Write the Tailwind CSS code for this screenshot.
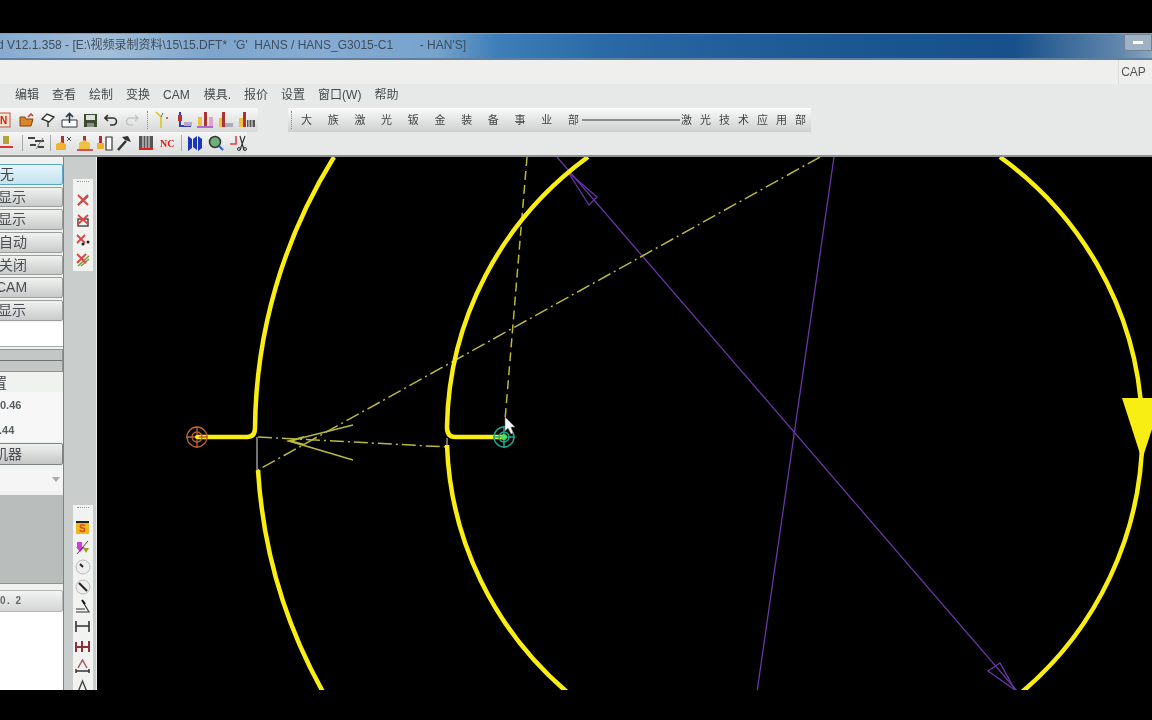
<!DOCTYPE html>
<html lang="zh-CN">
<head>
    <meta charset="UTF-8">
    <title>CAD</title>
    <script src="https://cdn.jsdelivr.net/npm/@tailwindcss/browser@4"></script>
</head>
<body class="bg-black">
    <div class="w-[1152px] h-[720px] overflow-hidden bg-black pt-[33px] pb-[30px] flex flex-col blur-[0.4px] font-['Liberation_Sans','Noto_Sans_CJK_SC',sans-serif] text-[#4a4f52]">

        <!-- Title bar -->
        <div class="h-[27px] shrink-0 flex justify-between border-t border-[#8aa0b4] border-b-2 border-b-[#5f7f9f] bg-[linear-gradient(90deg,#86abd0_0%,#a4bfd8_9%,#7ea6cd_18%,#86acd2_28%,#76a2cc_38%,#3f7fb9_43%,#2a6aa6_52%,#235f9c_62%,#1b5690_75%,#17508a_88%,#5f85ab_97%,#8aa5bf_100%)]">
            <div class="pl-0 -ml-[3px] text-[12px] leading-[22px] text-[#3d4d5e] whitespace-pre">d V12.1.358 - [E:\视频录制资料\15\15.DFT*  'G'  HANS / HANS_G3015-C1        - HAN'S]</div>
            <div class="w-[28px] h-[17px] bg-[#9fb2c4] border border-[#6d8296] rounded-bl-[3px] flex items-center justify-center">
                <div class="w-[10px] h-[3px] bg-white"></div>
            </div>
        </div>

        <!-- Status strip -->
        <div class="h-[24px] shrink-0 bg-[#eff0ee] flex justify-end pr-[4px]">
            <div class="w-[30px] border-l border-[#dcdedc] text-[12px] leading-[24px] text-center text-[#555]">CAP</div>
        </div>

        <!-- Menu and toolbars -->
        <div class="h-[73px] shrink-0 bg-[#e6e9e7] border-b-2 border-[#8d9190] relative">
            <div class="h-[21px] pt-[1px] flex text-[12px] leading-[21px] text-[#474a4c]">
                <span class="ml-[15px]">编辑</span>
                <span class="ml-[13px]">查看</span>
                <span class="ml-[13px]">绘制</span>
                <span class="ml-[13px]">变换</span>
                <span class="ml-[13px]">CAM</span>
                <span class="ml-[14px]">模具.</span>
                <span class="ml-[13px]">报价</span>
                <span class="ml-[13px]">设置</span>
                <span class="ml-[13px]">窗口(W)</span>
                <span class="ml-[13px]">帮助</span>
            </div>
            <div class="flex items-start mt-[3px]">
                <div class="w-[288px] shrink-0">
                    <!-- Toolbar row 1 -->
                    <div class="w-[258px] h-[24px] flex items-center bg-[linear-gradient(180deg,#f7f8f7,#d6d9d7)]">
                        <svg class="w-[14px] h-[16px] -ml-[3px]" viewBox="0 0 14 16"><rect x="1" y="1" width="12" height="14" fill="#f4e4cc" stroke="#b55"/><text x="3" y="12" font-size="10" font-weight="700" fill="#c22">N</text></svg>
                        <svg class="w-[16px] h-[16px] ml-[8px]" viewBox="0 0 16 16"><path d="M1 5h5l1 2h7l-2 7H1z" fill="#d9862a" stroke="#7a4410"/><path d="M9 5l3-3 2 2" fill="none" stroke="#c33" stroke-width="1.5"/></svg>
                        <svg class="w-[16px] h-[16px] ml-[5px]" viewBox="0 0 16 16"><path d="M2 7l5-5 7 3-5 5zM8 10v5" fill="#fff" stroke="#333" stroke-width="1.4"/></svg>
                        <svg class="w-[17px] h-[16px] ml-[5px]" viewBox="0 0 17 16"><path d="M1 8h15v7H1z" fill="#fff" stroke="#334"/><path d="M8.500 11V2M5 5l3.500-3.500L12 5" fill="none" stroke="#234" stroke-width="1.600"/></svg>
                        <svg class="w-[15px] h-[15px] ml-[5px]" viewBox="0 0 15 15"><rect x="1" y="1" width="13" height="13" fill="#3d4a34"/><rect x="3" y="2" width="9" height="5" fill="#dfe3d8"/><rect x="4" y="10" width="7" height="4" fill="#8b8f80"/></svg>
                        <svg class="w-[14px] h-[12px] ml-[6px]" viewBox="0 0 14 12"><path d="M4 1L1 4l3 3M1 4h8a3.500 3.500 0 0 1 0 7H6" fill="none" stroke="#333" stroke-width="1.600"/></svg>
                        <svg class="w-[14px] h-[12px] ml-[7px]" viewBox="0 0 14 12"><path d="M10 1l3 3-3 3M13 4H5a3.500 3.500 0 0 0 0 7h3" fill="none" stroke="#c4c7c5" stroke-width="1.600"/></svg>
                        <div class="h-[18px] ml-[8px] border-l border-dotted border-[#888]"></div>
                        <svg class="w-[14px] h-[18px] ml-[7px]" viewBox="0 0 14 18"><path d="M1 1l5 5v11" fill="none" stroke="#d8c820" stroke-width="1.600"/><path d="M6 6l2-4" stroke="#668" fill="none"/><circle cx="12" cy="7" r="1" fill="#c33"/></svg>
                        <svg class="w-[18px] h-[18px] ml-[6px]" viewBox="0 0 18 18"><path d="M5 1v14h11" fill="none" stroke="#3a3ab0" stroke-width="2"/><path d="M3 4h4v6H3z" fill="#b33"/><path d="M9 11h8v4H9z" fill="#b9a9c9"/></svg>
                        <svg class="w-[18px] h-[18px] ml-[3px]" viewBox="0 0 18 18"><path d="M1 15h16v2H1z" fill="#b36ad0"/><path d="M8 1h3v14H8z" fill="#a33"/><path d="M2 6h4v9H2z" fill="#f0c040"/><path d="M13 6h4v9h-4z" fill="#e5a0d0"/></svg>
                        <svg class="w-[16px] h-[18px] ml-[4px]" viewBox="0 0 16 18"><path d="M4 1h3v15H4z" fill="#a33"/><path d="M1 7h3v9H1z" fill="#f0c040"/><path d="M7 12h8v4H7z" fill="#aab"/></svg>
                        <svg class="w-[18px] h-[18px] ml-[4px]" viewBox="0 0 18 18"><path d="M5 1h3v15H5z" fill="#a33"/><path d="M1 7h4v9H1z" fill="#f0c040"/><path d="M9 9h8v7H9z" fill="#555"/><path d="M11 9v7M14 9v7" stroke="#eee"/></svg>
                    </div>
                    <!-- Toolbar row 2 -->
                    <div class="w-[247px] h-[22px] mt-[0px] flex items-center bg-[linear-gradient(180deg,#f4f5f4,#dcdfdd)]">
                        <svg class="w-[14px] h-[16px] -ml-[1px]" viewBox="0 0 14 16"><path d="M4 1h6v8H4z" fill="#b5a23a"/><path d="M0 11h14v2H0z" fill="#d33"/></svg>
                        <div class="h-[16px] ml-[9px] border-l border-[#aaa]"></div>
                        <svg class="w-[18px] h-[14px] ml-[4px]" viewBox="0 0 18 14"><path d="M1 2h7M8 5h9M3 9h6M11 11h6" stroke="#444" stroke-width="2"/><path d="M9 13l7-11" stroke="#777"/></svg>
                        <div class="h-[16px] ml-[5px] border-l border-[#aaa]"></div>
                        <svg class="w-[18px] h-[16px] ml-[4px]" viewBox="0 0 18 16"><path d="M6 1h3v9H6z" fill="#a33"/><path d="M1 9l5-2 5 2v6H1z" fill="#f0b030"/><path d="M12 2l4 4M16 2l-4 4" stroke="#555"/></svg>
                        <svg class="w-[18px] h-[16px] ml-[3px]" viewBox="0 0 18 16"><path d="M7 1h3v8H7z" fill="#a33"/><path d="M1 14h16v2H1z" fill="#c55"/><path d="M3 8l5-3 6 3v6H3z" fill="#f2c040"/></svg>
                        <svg class="w-[18px] h-[18px] ml-[2px]" viewBox="0 0 18 18"><path d="M3 2h3v8H3z" fill="#a33"/><path d="M1 9h7v6H1z" fill="#f0b030"/><path d="M10 3h6v13h-6z" fill="#fff" stroke="#333" stroke-width="1.200"/></svg>
                        <svg class="w-[16px] h-[16px] ml-[2px]" viewBox="0 0 16 16"><path d="M2 15L10 6" stroke="#333" stroke-width="2.500"/><path d="M6 2l6-1 3 6-3-1-3-1z" fill="#333"/></svg>
                        <svg class="w-[16px] h-[16px] ml-[6px]" viewBox="0 0 16 16"><rect x="1" y="1" width="14" height="12" fill="#555"/><path d="M5 1v12M8 1v12M11 1v12" stroke="#eee"/><path d="M1 14h14" stroke="#d22" stroke-width="2"/></svg>
                        <span class="ml-[6px] w-[18px] text-[10px] font-bold text-[#d42020] font-['Liberation_Serif',serif]">NC</span>
                        <div class="h-[16px] ml-[3px] border-l border-[#aaa]"></div>
                        <svg class="w-[16px] h-[16px] ml-[5px]" viewBox="0 0 16 16"><path d="M1 1l4 3v9l-4 3zM6 4l4-3v14l-4-3zM11 1l4 3v9l-4 3z" fill="#1a35b5"/></svg>
                        <svg class="w-[16px] h-[16px] ml-[5px]" viewBox="0 0 16 16"><circle cx="7" cy="7" r="5.500" fill="#6db07a" stroke="#333" stroke-width="1.500"/><path d="M11 11l4 4" stroke="#2a5ad0" stroke-width="2"/></svg>
                        <svg class="w-[18px] h-[16px] ml-[5px]" viewBox="0 0 18 16"><path d="M7 1v8H1" fill="none" stroke="#d44" stroke-width="1.600"/><path d="M11 1l4 14M16 1l-5 14" stroke="#333" stroke-width="1.200"/><circle cx="10" cy="14" r="1.500" fill="none" stroke="#333"/><circle cx="16" cy="14" r="1.500" fill="none" stroke="#333"/></svg>
                    </div>
                </div>
                <!-- Text toolbar -->
                <div class="w-[523px] h-[24px] flex items-center bg-[linear-gradient(180deg,#fafbfa,#ccd0ce)] text-[11px] text-[#444]">
                    <div class="h-[18px] ml-[3px] border-l border-dotted border-[#888]"></div>
                    <div class="ml-[9px] w-[278px] flex justify-between">
                        <span>大</span><span>族</span><span>激</span><span>光</span><span>钣</span><span>金</span><span>装</span><span>备</span><span>事</span><span>业</span><span>部</span>
                    </div>
                    <div class="w-[98px] ml-[3px] h-[1px] border-t-2 border-[#8d8f8c]"></div>
                    <div class="ml-[1px] w-[125px] flex justify-between">
                        <span>激</span><span>光</span><span>技</span><span>术</span><span>应</span><span>用</span><span>部</span>
                    </div>
                </div>
            </div>
        </div>

        <div class="flex-1 min-h-0 flex">
            <!-- Left panel -->
            <div class="w-[97px] shrink-0 flex bg-[#c9cdcb] border-r border-[#eef0ee]">
                <div class="w-[64px] shrink-0 flex flex-col text-[14px] overflow-hidden pt-[7px] border-r border-[#7f8382] bg-[#f0f2f0]">
                    <div class="h-[20.700px] bg-[linear-gradient(180deg,#e8f5fb,#c3e2f0)] border border-[#5aa5c5] rounded-r-[2px] leading-[19px] text-[#444] -ml-[1px]">无</div>
                    <div class="h-[20.700px] mt-[2px] bg-[linear-gradient(180deg,#f0f2f0,#c7cbc9)] border border-[#9a9e9c] rounded-r-[2px] leading-[19px] -ml-[3px]">显示</div>
                    <div class="h-[20.700px] mt-[2px] bg-[linear-gradient(180deg,#f0f2f0,#c7cbc9)] border border-[#9a9e9c] rounded-r-[2px] leading-[19px] -ml-[3px]">显示</div>
                    <div class="h-[20.700px] mt-[2px] bg-[linear-gradient(180deg,#f0f2f0,#c7cbc9)] border border-[#9a9e9c] rounded-r-[2px] leading-[19px] -ml-[2px]">自动</div>
                    <div class="h-[20.700px] mt-[2px] bg-[linear-gradient(180deg,#f0f2f0,#c7cbc9)] border border-[#9a9e9c] rounded-r-[2px] leading-[19px] -ml-[2px]">关闭</div>
                    <div class="h-[20.700px] mt-[2px] bg-[linear-gradient(180deg,#f0f2f0,#c7cbc9)] border border-[#9a9e9c] rounded-r-[2px] leading-[19px] -ml-[5px]">CAM</div>
                    <div class="h-[20.700px] mt-[2px] bg-[linear-gradient(180deg,#f0f2f0,#c7cbc9)] border border-[#9a9e9c] rounded-r-[2px] leading-[19px] -ml-[3px]">显示</div>
                    <div class="h-[25px] mt-[1px] bg-white border-b border-[#aaa]"></div>
                    <div class="h-[23px] mt-[2px] bg-[#c3c7c5] border-y border-r border-[#8f9391] flex items-center"><div class="w-full h-[1px] bg-[#6f7371]"></div></div>
                    <div class="h-[18px] mt-[2px] leading-[18px] text-[#3d4143] -ml-[7px]">置</div>
                    <div class="h-[50px] bg-[#f6f7f6] text-[11px] font-bold text-[#5a5f62]">
                        <div class="leading-[26px]">0.46</div>
                        <div class="leading-[24px] -ml-[1px]">.44</div>
                    </div>
                    <div class="h-[22px] mt-[1px] bg-[linear-gradient(180deg,#f0f2f0,#c3c7c5)] border border-[#7f8382] rounded-r-[2px] leading-[20px] -ml-[7px]">机器</div>
                    <div class="h-[22px] mt-[4px] bg-[#f4f5f4] flex items-center justify-end pr-[3px]">
                        <svg class="w-[8px] h-[5px]" viewBox="0 0 8 5"><path d="M0 0h8L4 5z" fill="#aaa"/></svg>
                    </div>
                    <div class="h-[89px] mt-[4px] bg-[#b9bdbb] border-b border-[#8f9391]"></div>
                    <div class="h-[22px] mt-[6px] bg-[linear-gradient(180deg,#f2f3f2,#d3d6d4)] border border-[#b5b8b6] rounded-r-[2px] text-[10px] leading-[20px] tracking-[1.500px] font-bold text-[#666] -ml-[1px]">0. 2</div>
                    <div class="flex-1 bg-white"></div>
                </div>
                <div class="flex-1 flex flex-col items-center pl-[6px] pr-[1px]">
                    <!-- Upper strip -->
                    <div class="w-[20px] h-[92px] mt-[22px] bg-[#f1f3f1] flex flex-col items-center">
                        <div class="mt-[2px] w-[12px] border-t border-dotted border-[#999]"></div>
                        <svg class="w-[14px] h-[14px] mt-[11px]" viewBox="0 0 14 14"><path d="M2 12l10-9" stroke="#556" stroke-width="2"/><path d="M2 2l10 10M12 2L2 12" stroke="#d44" stroke-width="1.800"/></svg>
                        <svg class="w-[14px] h-[14px] mt-[6px]" viewBox="0 0 14 14"><rect x="2" y="6" width="10" height="7" fill="none" stroke="#444" stroke-width="1.400"/><path d="M2 2l10 9M12 2L2 11" stroke="#d44" stroke-width="1.800"/></svg>
                        <svg class="w-[14px] h-[14px] mt-[6px]" viewBox="0 0 14 14"><path d="M1 2l8 8M9 2l-8 8" stroke="#d44" stroke-width="1.800"/><circle cx="7" cy="11" r="1.500" fill="#222"/><circle cx="12" cy="9" r="1.500" fill="#222"/></svg>
                        <svg class="w-[14px] h-[14px] mt-[6px]" viewBox="0 0 14 14"><path d="M2 13L13 3M5 13L13 6" stroke="#7a9f30" stroke-width="1.500"/><path d="M1 1l9 9M10 1l-9 9" stroke="#d44" stroke-width="1.800"/></svg>
                    </div>
                    <!-- Lower strip -->
                    <div class="w-[20px] flex-1 mt-[234px] bg-[#f1f3f1] flex flex-col items-center overflow-hidden">
                        <div class="mt-[2px] w-[12px] border-t border-dotted border-[#999]"></div>
                        <svg class="w-[15px] h-[15px] mt-[12px] shrink-0" viewBox="0 0 15 15"><rect x="1" y="2" width="13" height="12" fill="#eeb820"/><path d="M1 2h13" stroke="#222" stroke-width="2"/><text x="4" y="12" font-size="10" font-weight="700" fill="#d42">S</text></svg>
                        <svg class="w-[15px] h-[15px] mt-[5px] shrink-0" viewBox="0 0 15 15"><path d="M2 2h5v5h3L5 12 1 7h1z" fill="#d43ad8"/><path d="M8 8h6l-3 5z" fill="#a0a020"/><path d="M2 14L13 1" stroke="#444"/></svg>
                        <svg class="w-[16px] h-[16px] mt-[4px] shrink-0" viewBox="0 0 16 16"><circle cx="8" cy="8" r="7" fill="#eee" stroke="#bbb"/><path d="M5 5l3 3" stroke="#222" stroke-width="2"/></svg>
                        <svg class="w-[16px] h-[16px] mt-[4px] shrink-0" viewBox="0 0 16 16"><circle cx="8" cy="8" r="7" fill="#eee" stroke="#bbb"/><path d="M4 4l8 8" stroke="#222" stroke-width="2"/></svg>
                        <svg class="w-[15px] h-[15px] mt-[4px] shrink-0" viewBox="0 0 15 15"><path d="M1 13h13L8 3" fill="none" stroke="#333" stroke-width="1.200"/><path d="M1 10h9" stroke="#333"/><path d="M7 1l3 4" stroke="#111" stroke-width="2"/></svg>
                        <svg class="w-[15px] h-[15px] mt-[5px] shrink-0" viewBox="0 0 15 15"><path d="M1 2v11M14 2v11M1 7h13" stroke="#333" stroke-width="1.600"/></svg>
                        <svg class="w-[15px] h-[15px] mt-[5px] shrink-0" viewBox="0 0 15 15"><path d="M1 3v10M7 2v11M14 2v11M1 8h13" stroke="#8c3040" stroke-width="2"/></svg>
                        <svg class="w-[15px] h-[15px] mt-[5px] shrink-0" viewBox="0 0 15 15"><path d="M3 9L7.500 1 12 9" fill="none" stroke="#b05060" stroke-width="1.500"/><path d="M1 12h13M1 10v4M14 10v4" stroke="#333" stroke-width="1.500"/></svg>
                        <svg class="w-[15px] h-[15px] mt-[5px] shrink-0" viewBox="0 0 15 15"><path d="M3 13L7.500 2 12 13z" fill="none" stroke="#444" stroke-width="1.400"/></svg>
                    </div>
                </div>
            </div>

            <!-- Drawing canvas -->
            <div class="flex-1 min-w-0 bg-black">
                <svg class="block w-[1055px] h-[533px]" viewBox="97 157 1055 533" fill="none">
                    <!-- Purple construction lines -->
                    <g stroke="#6a35a8" stroke-width="1.300">
                        <path d="M557 157L1018 692"/>
                        <path d="M834 157L757 692"/>
                        <path d="M568 172L597 197 589 205z"/>
                        <path d="M1015 690L1000 663 988 671z"/>
                    </g>
                    <!-- Dashed lead paths -->
                    <g stroke="#b8b83a" stroke-width="1.500">
                        <path d="M527 157L505 420" stroke-dasharray="9 5"/>
                        <path d="M820 157L258 470" stroke-dasharray="14 4 2 4"/>
                        <path d="M258 437L447 447" stroke-dasharray="14 4 2 4"/>
                        <path d="M353 425L289 441 353 460"/>
                        <path d="M304 437L290 441 305 445" stroke-width="2"/>
                    </g>
                    <!-- Thin closure lines -->
                    <path d="M257 437V470" stroke="#e4e4e4"/>
                    <path d="M447 438V445" stroke="#d8d8d8"/>
                    <!-- Part contours -->
                    <g stroke="#f8ee14" stroke-width="4.500">
                        <path d="M334 157A520 520 0 0 0 255 428Q255 437 247 437H197"/>
                        <path d="M258 470A520 520 0 0 0 323 692"/>
                        <path d="M588 157A347 342 0 0 0 447 427Q447 437 455 437H504"/>
                        <path d="M447 445A347 342 0 0 0 567 692"/>
                        <path d="M1000 157A347 342 0 0 1 1022 692"/>
                    </g>
                    <path d="M1122 398H1162L1142 460z" fill="#f8ee14"/>
                    <!-- Start markers -->
                    <g stroke="#b8642a" stroke-width="1.300">
                        <circle cx="197" cy="437" r="10"/>
                        <circle cx="197" cy="437" r="5"/>
                        <path d="M186 437H208M197 426V448"/>
                    </g>
                    <circle cx="197" cy="437" r="2" fill="#f8ee14"/>
                    <g stroke="#1fa890" stroke-width="1.500">
                        <circle cx="504" cy="437" r="10"/>
                        <circle cx="504" cy="437" r="5"/>
                        <path d="M493 437H515M504 426V448"/>
                    </g>
                    <circle cx="504" cy="437" r="3" fill="#50e060"/>
                    <!-- Mouse pointer -->
                    <path d="M505 417V431L508 428 511 434 513 433 511 427 515 427z" fill="#f4f4f4" stroke="#777" stroke-width=".5"/>
                </svg>
            </div>
        </div>
    </div>
</body>
</html>
